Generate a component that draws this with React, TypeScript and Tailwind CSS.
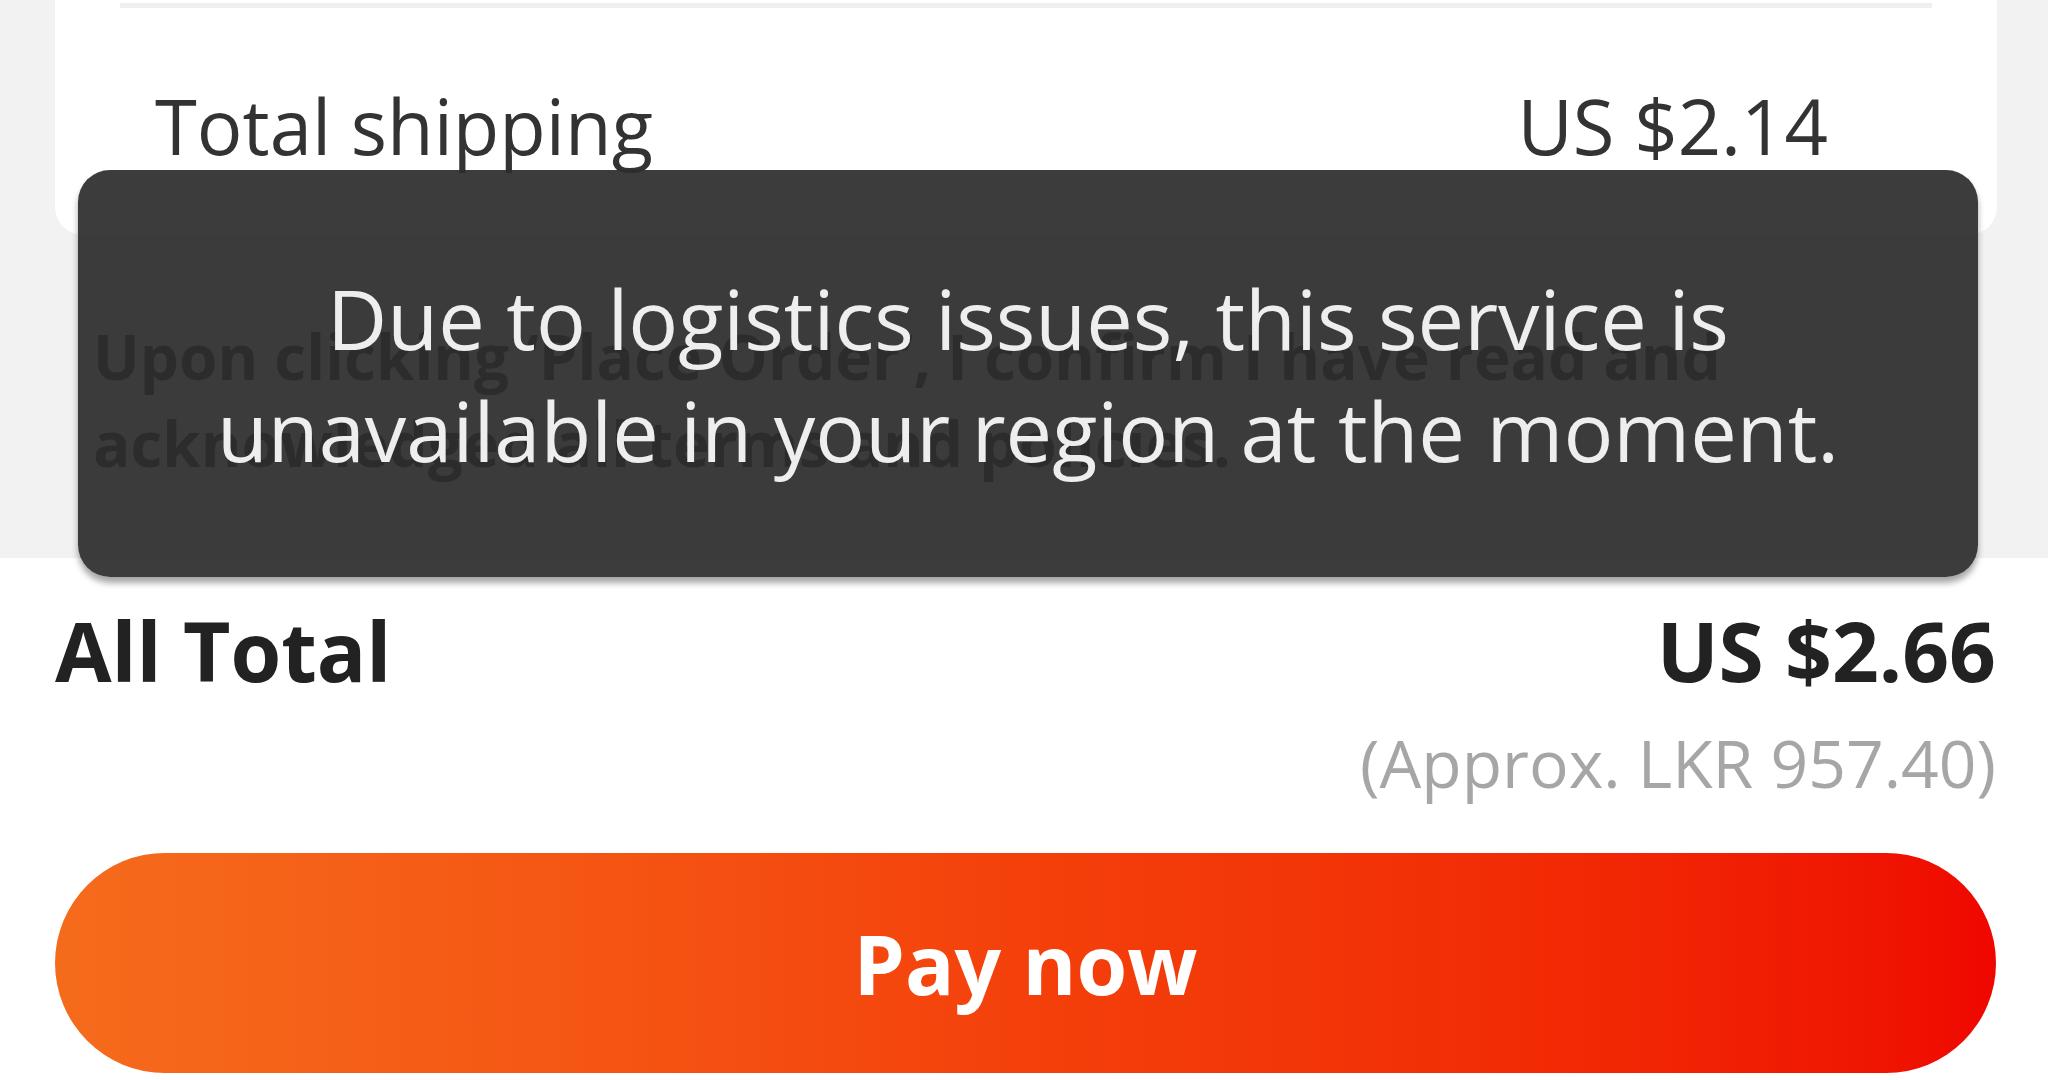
import React from "react";

const font = "font-['Open_Sans','Noto_Sans',sans-serif]";

function ShippingCard() {
    return (
        <div className="h-[235px] bg-white rounded-b-[28px] flex flex-col">
            <div className="mt-[3px] mx-[65px] h-[5px] bg-[#efefef]" />
            <div className="mt-[68px] pl-[100px] pr-[169px] flex items-center justify-between text-[76px] leading-[100px] text-[#333]">
                <span>Total shipping</span>
                <span>US $2.14</span>
            </div>
        </div>
    );
}

function Toast({ message }: { message: string[] }) {
    return (
        <div className="absolute left-[78px] top-[170px] w-[1900px] h-[407px] rounded-[32px] bg-[rgba(43,43,43,0.92)] shadow-[0_6px_6px_rgba(0,0,0,0.35)] flex flex-col items-center justify-center">
            {message.map((line) => (
                <p key={line} className="text-[83px] leading-[112px] text-[#eeeeee]">
                    {line}
                </p>
            ))}
        </div>
    );
}

export default function App() {
    return (
        <div className={`relative w-[2048px] h-[1080px] overflow-hidden bg-white ${font}`}>
            <section className="h-[558px] bg-[#f2f2f2] pl-[55px] pr-[51px]">
                <ShippingCard />
                <p className="mt-[78px] pl-[38px] text-[62px] leading-[87px] font-bold text-[#333]">
                    Upon clicking ‘Place Order’, I confirm I have read and
                    <br />
                    acknowledged all terms and policies.
                </p>
            </section>

            <section className="pl-[55px] pr-[52px] pt-[42px]">
                <div className="flex items-center justify-between text-[82px] leading-[100px] font-bold text-[#222]">
                    <span>All Total</span>
                    <span>US $2.66</span>
                </div>
                <div className="mt-[17px] text-right text-[66px] leading-[90px] text-[#a6a6a6]">
                    (Approx. LKR 957.40)
                </div>
                <button className="mt-[46px] w-full h-[220px] rounded-full bg-linear-to-r from-[#f56b1c] via-[#f4400b] to-[#ef0600] flex items-center justify-center">
                    <span className="text-[82px] leading-none font-bold text-white">Pay now</span>
                </button>
            </section>

            <Toast
                message={[
                    "Due to logistics issues, this service is",
                    "unavailable in your region at the moment.",
                ]}
            />
        </div>
    );
}
